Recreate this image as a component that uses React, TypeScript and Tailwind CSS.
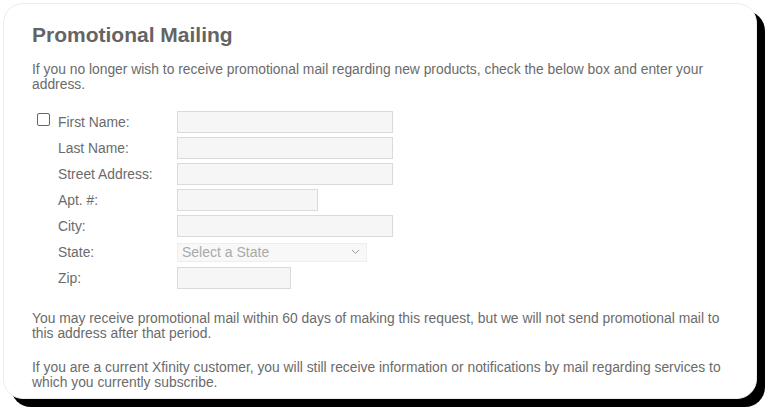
const fields = [
  { label: "First Name:", width: "w-[216px]", check: true },
  { label: "Last Name:", width: "w-[216px]" },
  { label: "Street Address:", width: "w-[216px]" },
  { label: "Apt. #:", width: "w-[141px]" },
  { label: "City:", width: "w-[216px]" },
  { label: "State:", select: true },
  { label: "Zip:", width: "w-[114px]" },
];

export default function App() {
  return (
    <div className="min-h-[415px] bg-white pl-[3px] pt-[3px] font-['Liberation_Sans',Arial,sans-serif]">
      <div className="h-[396px] w-[754px] rounded-[20px] border border-[#ececec] bg-white pl-[28px] pr-[20px] pt-[19px] text-[13.85px] text-[#6b6b6b] shadow-[8px_8px_0_0_#000]">
        <h1 className="mb-[16px] text-[21px] font-bold leading-[23px] text-[#646464]">Promotional Mailing</h1>
        <p className="leading-[15px]">
          If you no longer wish to receive promotional mail regarding new products, check the below box and enter your
          address.
        </p>

        <div className="mt-[19px] flex flex-col gap-[4px]">
          {fields.map((f) => (
            <div key={f.label} className="flex h-[22px] items-center">
              <div className="ml-[5px] flex w-[21px] self-start pt-[2px]">
                {f.check && <span className="h-[13px] w-[13px] rounded-[2px] border border-[#666] bg-white" />}
              </div>
              <label className="w-[119px] leading-[22px]">{f.label}</label>
              {f.select ? (
                <div className="flex h-[19px] w-[190px] items-center justify-between border border-[#eee] bg-[#f8f8f8] pl-[4px] pr-[6px] text-[#aaa]">
                  <span className="text-[14px] leading-[17px]">Select a State</span>
                  <svg width="9" height="6" viewBox="0 0 9 6" fill="none" stroke="#999" strokeWidth="1">
                    <path d="M1 1l3.5 3.5L8 1" />
                  </svg>
                </div>
              ) : (
                <input className={`${f.width} h-[22px] border border-[#dadada] bg-[#f6f6f6] outline-none`} />
              )}
            </div>
          ))}
        </div>

        <p className="mt-[22px] leading-[15px]">
          You may receive promotional mail within 60 days of making this request, but we will not send promotional mail to
          this address after that period.
        </p>
        <p className="mt-[19px] leading-[15px]">
          If you are a current Xfinity customer, you will still receive information or notifications by mail regarding
          services to which you currently subscribe.
        </p>
      </div>
    </div>
  );
}
